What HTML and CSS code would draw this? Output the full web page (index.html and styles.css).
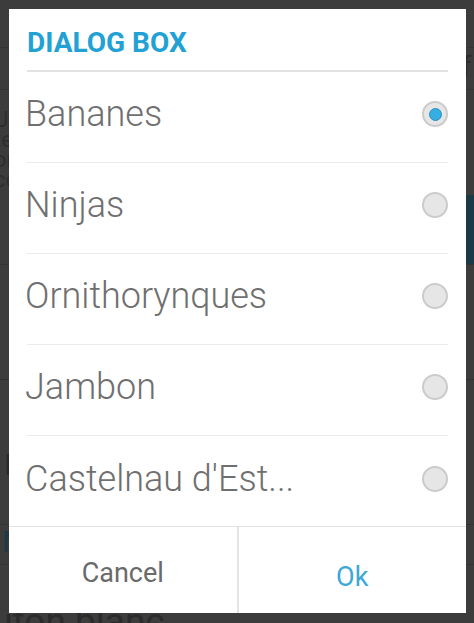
FILE: index.html
```html
<!DOCTYPE html>
<html lang="fr">
<head>
<meta charset="utf-8">
<title>Dialog box</title>
<link rel="stylesheet" href="styles.css">
</head>
<body>
<div class="screen">
  <div class="backdrop">
    <div class="bg-row bg-row-a"><span class="bg-letter">f</span></div>
    <div class="bg-row bg-row-b"><div class="bg-clip"><p class="bg-para">Un texte ordinaire contenu</p></div></div>
    <div class="bg-row bg-row-c"><div class="bg-teal"></div></div>
    <div class="bg-row bg-row-d"></div>
    <div class="bg-row bg-row-e"><span class="bg-mark">I</span></div>
    <div class="bg-row bg-row-g"><span class="bg-title">Menu</span></div>
    <div class="bg-row bg-row-f"><span class="bg-text">Bouton blanc</span></div>
  </div>
  <div class="dialog">
    <div class="dialog-header">
      <h1 class="dialog-title">DIALOG BOX</h1>
    </div>
    <ul class="choices">
      <li class="choice"><span class="choice-label">Bananes</span><span class="radio radio-on"></span></li>
      <li class="choice"><span class="choice-label">Ninjas</span><span class="radio"></span></li>
      <li class="choice"><span class="choice-label">Ornithorynques</span><span class="radio"></span></li>
      <li class="choice"><span class="choice-label">Jambon</span><span class="radio"></span></li>
      <li class="choice"><span class="choice-label">Castelnau d'Est...</span><span class="radio"></span></li>
    </ul>
    <div class="buttons">
      <button class="btn btn-cancel">Cancel</button>
      <button class="btn btn-ok">Ok</button>
    </div>
  </div>
</div>
</body>
</html>
```
FILE: styles.css
```css
* { box-sizing: border-box; }
html, body {
  margin: 0;
  padding: 0;
  width: 474px;
  height: 623px;
  overflow: hidden;
  background: #3b3b3b;
  font-family: Roboto, "Liberation Sans", sans-serif;
}
.screen {
  position: relative;
  width: 474px;
  height: 623px;
  overflow: hidden;
}
.backdrop {
  display: flex;
  flex-direction: column;
  height: 623px;
  background: #3c3c3c;
}
.bg-row {
  border-bottom: 1px solid #343434;
  flex: none;
}
.bg-row-a {
  height: 43px;
  margin-top: 47px;
  border-top: 1px solid #353535;
  padding: 4px 0 0 461px;
}
.bg-letter { color: #2c2c2c; font-size: 30px; line-height: 30px; }
.bg-row-b {
  height: 105px;
  padding: 20px 0 0 0;
  border-bottom: none;
}
.bg-clip {
  width: 9px;
  height: 85px;
  overflow: hidden;
}
.bg-para {
  margin: 0 0 0 -6px;
  width: 30px;
  color: #2e2e2e;
  font-size: 22px;
  line-height: 20px;
}
.bg-row-c {
  height: 70px;
  display: flex;
  justify-content: flex-end;
  border-bottom: 1px solid #333;
}
.bg-teal { width: 60px; background: #1c3a45; }
.bg-row-d { height: 115px; border-bottom: 1px solid #313131; }
.bg-row-e { height: 145px; padding: 70px 0 0 4px; }
.bg-mark { color: #2a2a2a; font-size: 30px; line-height: 30px; }
.bg-row-g { height: 40px; padding: 2px 0 0 0; }
.bg-title { color: #1d3a44; font-size: 30px; line-height: 30px; margin-left: 2px; }
.bg-row-f {
  flex: 1;
  display: flex;
  align-items: flex-end;
  border-bottom: none;
}
.bg-text {
  color: #2b2b2b;
  font-size: 37px;
  line-height: 30px;
  margin-left: -52px;
  margin-bottom: -14px;
  white-space: nowrap;
}
.dialog {
  position: absolute;
  left: 9px;
  top: 9px;
  width: 457px;
  height: 604px;
  background: #ffffff;
  display: flex;
  flex-direction: column;
}
.dialog-header {
  padding: 0 18px;
}
.dialog-title {
  margin: 0;
  padding: 18px 0 12px;
  font-size: 28px;
  line-height: 31px;
  font-weight: 700;
  color: #22a1d5;
  border-bottom: 2px solid #e2e2e2;
}
.choices {
  list-style: none;
  margin: 0;
  padding: 0 18px;
}
.choice {
  height: 91px;
  padding-bottom: 6px;
  display: flex;
  align-items: center;
  justify-content: space-between;
  border-bottom: 1px solid #ebebeb;
}
.choice:last-child {
  border-bottom: none;
  height: 90px;
  padding-bottom: 5px;
}
.choice-label {
  font-size: 36px;
  font-weight: 300;
  color: #6f6f6f;
  margin-left: -2px;
  white-space: nowrap;
}
.radio {
  width: 26px;
  height: 26px;
  border-radius: 50%;
  background: #e6e6e6;
  border: 2px solid #cbcbcb;
  display: flex;
  align-items: center;
  justify-content: center;
  flex: none;
}
.radio-on::after {
  content: "";
  width: 13px;
  height: 13px;
  border-radius: 50%;
  background: #37aee2;
  border: 1px solid #2a8fbf;
  box-sizing: border-box;
}
.buttons {
  flex: 1;
  display: flex;
  border-top: 1px solid #e2e2e2;
}
.btn {
  flex: 1;
  border: none;
  background: #fff;
  font-family: Roboto, "Liberation Sans", sans-serif;
  font-size: 27px;
  line-height: 32px;
  margin: 0;
  cursor: pointer;
}
.btn-cancel {
  color: #6a6a6a;
  padding: 6px 0 0;
  border-right: 2px solid #e4e4e4;
}
.btn-ok {
  color: #3aa8d8;
  padding: 14px 0 0;
}
```
